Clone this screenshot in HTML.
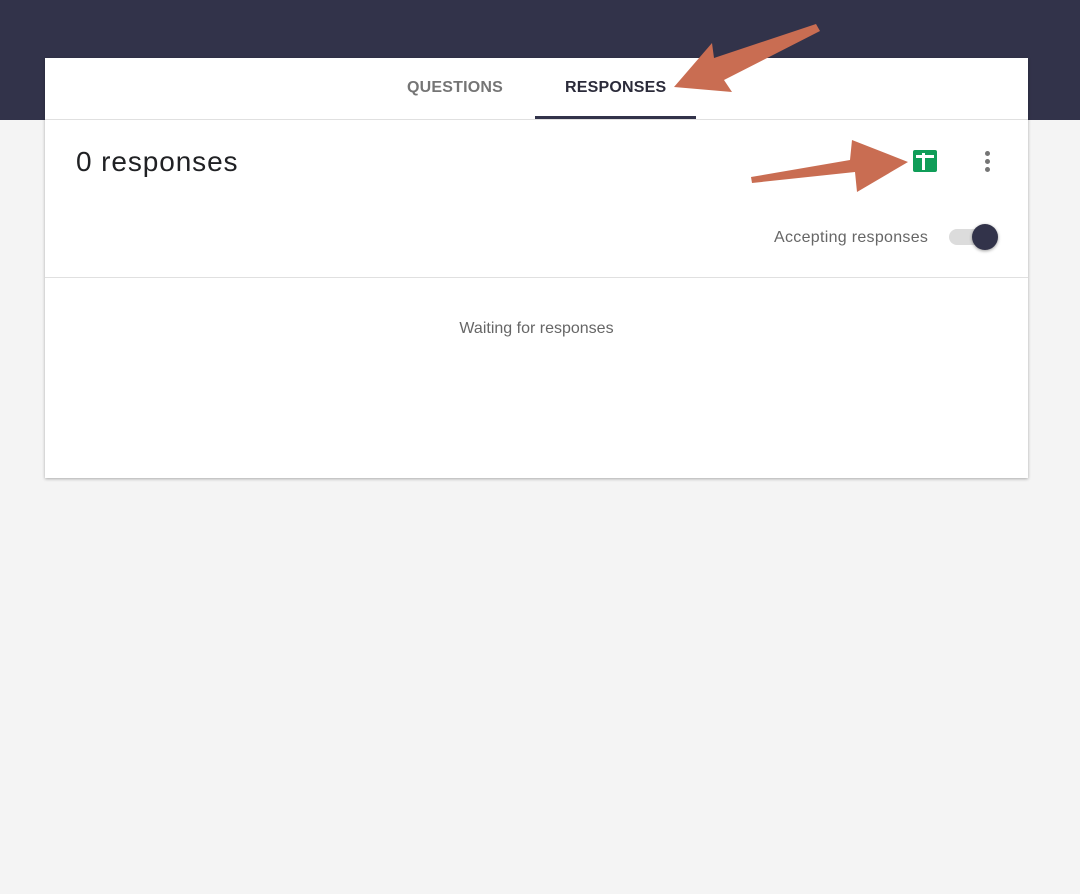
<!DOCTYPE html><html><head><style>
body{margin:0;width:1080px;height:894px;background:#f4f4f4;font-family:"Liberation Sans",sans-serif;position:relative;overflow:hidden}
.top{position:absolute;left:0;top:0;width:1080px;height:120px;background:#32334a}
.card{position:absolute;left:45px;top:58px;width:983px;height:420px;background:#fff;box-shadow:0 1px 3px rgba(0,0,0,.3)}
.tab{position:absolute;top:21px;font-size:16px;font-weight:bold;letter-spacing:.2px}
.abs{position:absolute}
</style></head><body>
<div class="top"></div>
<div class="card">
<div class="tab" style="left:362px;color:#757575">QUESTIONS</div>
<div class="tab" style="left:520px;color:#2b2b3a">RESPONSES</div>
<div class="abs" style="left:490px;top:58px;width:161px;height:3px;background:#32334a"></div>
<div class="abs" style="left:0;top:61px;width:983px;height:1px;background:#e0e0e0"></div>
<div class="abs" style="left:31px;top:88px;font-size:28px;color:#202124;letter-spacing:0.9px">0 responses</div>
<div class="abs" style="left:868px;top:92px;width:24px;height:22px;background:#0f9d58;border-radius:2px"></div>
<div class="abs" style="left:871px;top:97px;width:18px;height:3px;background:#fff"></div>
<div class="abs" style="left:877px;top:95px;width:3px;height:17px;background:#fff"></div>
<div class="abs" style="left:940px;top:93px;width:5px;height:5px;border-radius:50%;background:#757575"></div>
<div class="abs" style="left:940px;top:101px;width:5px;height:5px;border-radius:50%;background:#757575"></div>
<div class="abs" style="left:940px;top:109px;width:5px;height:5px;border-radius:50%;background:#757575"></div>
<div class="abs" style="left:729px;top:171px;font-size:16px;color:#666;letter-spacing:0.3px">Accepting responses</div>
<div class="abs" style="left:904px;top:171px;width:40px;height:16px;border-radius:8px;background:#dcdcdc"></div>
<div class="abs" style="left:927px;top:166px;width:26px;height:26px;border-radius:50%;background:#32334a;box-shadow:0 1px 3px rgba(0,0,0,.4)"></div>
<div class="abs" style="left:0;top:219px;width:983px;height:1px;background:#e0e0e0"></div>
<div class="abs" style="left:0;top:262px;width:983px;text-align:center;font-size:16px;color:#666">Waiting for responses</div>
</div>
<svg class="abs" style="left:0;top:0" width="1080" height="894">
<polygon points="816,24 820,31 724,80 732,92 674,87 712,43 714,58" fill="#c96d52"/>
<polygon points="751,177 850,160 852,140 908,162 857,192 855,172 752,183" fill="#c96d52"/>
</svg>
</body></html>
